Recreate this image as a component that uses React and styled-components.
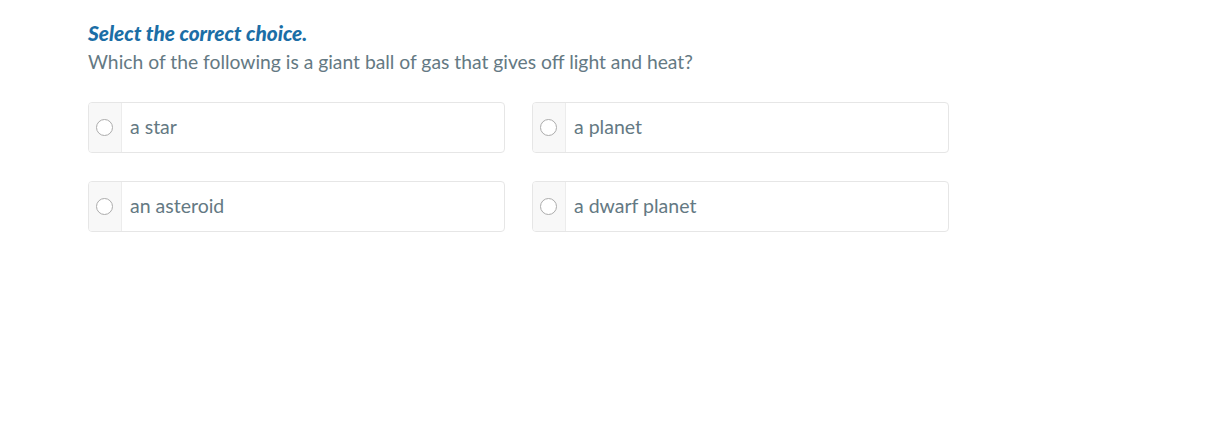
import React from "react";
import styled, { createGlobalStyle } from "styled-components";

const Global = createGlobalStyle`
  html, body { margin: 0; padding: 0; background: #fff; }
  body { font-family: Lato, "Open Sans", sans-serif; }
`;

const Page = styled.div`
  padding: 20px 0 0 88px;
  width: 861px;
`;

const Title = styled.h2`
  margin: 0;
  font-size: 20.8px;
  line-height: 26px;
  font-weight: 900;
  font-style: italic;
  color: #1b6ea6;
`;

const Question = styled.p`
  margin: 3px 0 0;
  font-size: 19.3px;
  line-height: 26px;
  color: #647983;
`;

const Grid = styled.div`
  margin-top: 27px;
  display: grid;
  grid-template-columns: 417px 417px;
  column-gap: 27px;
  row-gap: 28px;
`;

const Choice = styled.label`
  display: flex;
  height: 51px;
  box-sizing: border-box;
  border: 1px solid #e6e6e6;
  border-radius: 4px;
  overflow: hidden;
  cursor: pointer;
`;

const RadioCell = styled.span`
  width: 32px;
  flex: none;
  display: flex;
  align-items: center;
  justify-content: center;
  background: #f8f8f8;
  border-right: 1px solid #ececec;
`;

const Radio = styled.span`
  width: 15px;
  height: 15px;
  border: 1px solid #acacac;
  border-radius: 50%;
  background: #fff;
  margin-left: -1px;
`;

const Label = styled.span`
  display: flex;
  align-items: center;
  padding: 0 0 3px 8px;
  font-size: 19.5px;
  color: #647983;
`;

const choices = ["a star", "a planet", "an asteroid", "a dwarf planet"];

export default function App() {
  return (
    <>
      <Global />
      <Page>
        <Title>Select the correct choice.</Title>
        <Question>Which of the following is a giant ball of gas that gives off light and heat?</Question>
        <Grid>
          {choices.map((c) => (
            <Choice key={c}>
              <RadioCell>
                <Radio />
              </RadioCell>
              <Label>{c}</Label>
            </Choice>
          ))}
        </Grid>
      </Page>
    </>
  );
}
